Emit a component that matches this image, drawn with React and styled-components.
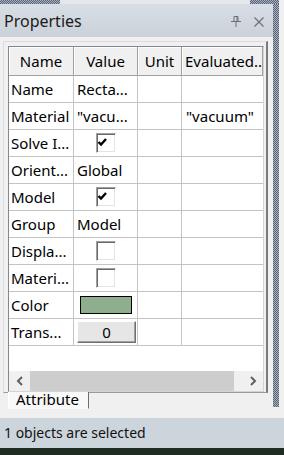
import React from 'react'
import styled, { createGlobalStyle } from 'styled-components'

const GlobalStyle = createGlobalStyle`
  html, body {
    margin: 0;
    padding: 0;
    background: #f0f0f0;
  }
  body {
    font-family: "Noto Sans", "Open Sans", sans-serif;
    color: #000;
  }
`

const hatch = `repeating-conic-gradient(#57637a 0 25%, #aab1bb 0 50%) 0 0 / 2px 2px`

const Screen = styled.div`
  width: 284px;
  height: 455px;
  display: flex;
  flex-direction: column;
  overflow: hidden;
`

const Workspace = styled.div`
  display: grid;
  grid-template-columns: 273px 6px 1fr;
  grid-template-rows: 4px 1fr;
  height: 418px;
  background: #f0f0f0;
`

const TopStrip = styled.div`
  grid-column: 1 / 3;
  display: flex;
`

const Hatch = styled.div`
  width: ${p => p.$w || 'auto'};
  flex: ${p => (p.$w ? 'none' : '1')};
  background: ${p => (p.$light ? '#e4e7eb' : hatch)};
`

const SideHatch = styled.div`
  grid-column: 2;
  grid-row: 2;
  height: 403px;
  background: ${hatch};
`

const Panel = styled.div`
  grid-column: 1;
  grid-row: 2;
  display: flex;
  flex-direction: column;
  min-height: 0;
`

const TitleBar = styled.div`
  height: 33px;
  flex: none;
  display: flex;
  align-items: center;
  padding-left: 4px;
  background: linear-gradient(#d8dee5, #cad1d9);
`

const TitleText = styled.div`
  flex: 1;
  font-size: 16px;
  color: #1b1b1b;
`

const TitleIcon = styled.svg`
  flex: none;
  margin-right: ${p => p.$mr}px;
  margin-top: 2px;
`

const Body = styled.div`
  flex: 1;
  padding: 4px 0 0 3px;
  display: flex;
  flex-direction: column;
`

const Frame = styled.div`
  width: 265px;
  box-sizing: border-box;
  border: 1px solid;
  border-color: #dcdcdc #7a7a7a #9a9a9a #dcdcdc;
  border-right-width: 2px;
  padding: 4px 2px 0 4px;
`

const Inner = styled.div`
  width: 256px;
  box-sizing: border-box;
  border: 1px solid;
  border-color: #828790 #d4d4d4 #d4d4d4 #828790;
  background: #fff;
`

const Table = styled.div`
  display: grid;
  grid-template-columns: 65px 64px 44px 81px;
  grid-auto-rows: 27px;
  grid-template-rows: 29px;
`

const HeadCell = styled.div`
  box-sizing: border-box;
  background: #f0f0f0;
  border-right: 1px solid #a0a0a0;
  border-bottom: 1px solid #a0a0a0;
  box-shadow: inset 1px 1px #fff;
  font-size: 15px;
  line-height: 28px;
  text-align: ${p => p.$align || 'center'};
  padding-left: ${p => p.$pl || 0}px;
  white-space: nowrap;
  overflow: hidden;
`

const Cell = styled.div`
  box-sizing: border-box;
  border-bottom: 1px solid #c4c4c4;
  border-right: ${p => (p.$last ? 'none' : '1px solid #c4c4c4')};
  display: flex;
  align-items: center;
  justify-content: ${p => (p.$center ? 'center' : 'flex-start')};
  padding-left: ${p => p.$pl || 0}px;
  font-size: 15px;
  white-space: nowrap;
  overflow: hidden;
`

const Check = styled.div`
  width: 20px;
  height: 20px;
  box-sizing: border-box;
  border: 1px solid;
  border-color: #a0a0a0 #fff #fff #a0a0a0;
  box-shadow: inset 1px 1px #696969, inset -1px -1px #e3e3e3;
  background: #fff;
  margin-left: 1px;
  display: flex;
  align-items: flex-start;
  justify-content: flex-start;
`

const Swatch = styled.div`
  width: 52px;
  height: 18px;
  box-sizing: border-box;
  border: 1px solid #000;
  background: ${p => p.$color};
  margin-left: 1px;
`

const ValueButton = styled.div`
  width: 59px;
  height: 22px;
  box-sizing: border-box;
  margin-left: 3px;
  border: 1px solid;
  border-color: #fff #6f6f6f #6f6f6f #fff;
  box-shadow: inset -1px -1px #a0a0a0;
  background: #e6e6e6;
  font-size: 15px;
  line-height: 20px;
  text-align: center;
`

const Filler = styled.div`
  height: 25px;
`

const Scrollbar = styled.div`
  height: 20px;
  display: flex;
  background: #f0f0f0;
`

const ArrowBtn = styled.div`
  width: 21px;
  flex: none;
  display: flex;
  align-items: center;
  justify-content: center;
`

const Thumb = styled.div`
  width: 204px;
  flex: none;
  background: #cdcdcd;
`

const Track = styled.div`
  flex: 1;
`

const TabStrip = styled.div`
  flex: 1;
  padding-left: 5px;
  display: flex;
  align-items: flex-start;
`

const Tab = styled.div`
  width: 81px;
  height: 17px;
  box-sizing: border-box;
  margin-top: -1px;
  border: 1px solid;
  border-color: #b0b0b0 #6d6d6d transparent #fff;
  border-top: none;
  background: #f8f8f8;
  font-size: 15px;
  line-height: 15px;
  padding-left: 7px;
`

const StatusBar = styled.div`
  height: 30px;
  flex: none;
  background: #cdd5dc;
  padding-left: 4px;
  font-size: 14px;
  line-height: 30px;
  color: #111;
`

const BottomEdge = styled.div`
  height: 7px;
  flex: none;
  background: #1f2c21;
`

const CheckBox = ({ checked }) => (
  <Check>
    {checked && (
      <svg width="12" height="14" viewBox="0 0 12 14">
        <path d="M1.5 8 L4 10.5 L9 5" fill="none" stroke="#000" strokeWidth="2.4" />
      </svg>
    )}
  </Check>
)

const Chevron = ({ dir }) => (
  <svg width="8" height="10" viewBox="0 0 8 10">
    <path
      d={dir === 'left' ? 'M6 1 L2 5 L6 9' : 'M2 1 L6 5 L2 9'}
      fill="none"
      stroke="#606060"
      strokeWidth="2"
    />
  </svg>
)

const rows = [
  { name: 'Name', text: 'Recta...' },
  { name: 'Material', text: '"vacu...', evaluated: '"vacuum"' },
  { name: 'Solve I...', check: true },
  { name: 'Orient...', text: 'Global' },
  { name: 'Model', check: true },
  { name: 'Group', text: 'Model' },
  { name: 'Displa...', check: false },
  { name: 'Materi...', check: false },
  { name: 'Color', swatch: '#8fae8e' },
  { name: 'Trans...', button: '0' },
]

const renderValue = row => {
  if (row.text) return <Cell $pl={3}>{row.text}</Cell>
  if (row.check !== undefined) return <Cell $center><CheckBox checked={row.check} /></Cell>
  if (row.swatch) return <Cell $center><Swatch $color={row.swatch} /></Cell>
  return <Cell><ValueButton>{row.button}</ValueButton></Cell>
}

export default function App() {
  return (
    <Screen>
      <GlobalStyle />
      <Workspace>
        <TopStrip>
          <Hatch $w="60px" />
          <Hatch $light />
          <Hatch $w="29px" />
        </TopStrip>
        <Panel>
          <TitleBar>
            <TitleText>Properties</TitleText>
            <TitleIcon $mr={13} width="10" height="11" viewBox="0 0 10 11">
              <path d="M3 0.5 H7 V5.5 M3 0.5 V5.5 M0 5.5 H10 M5 5.5 V11 M6 1 V5" fill="none" stroke="#6e6e6e" strokeWidth="1" />
            </TitleIcon>
            <TitleIcon $mr={9} width="10" height="10" viewBox="0 0 10 10">
              <path d="M0.5 0.5 L9.5 9.5 M9.5 0.5 L0.5 9.5" stroke="#707070" strokeWidth="1.2" />
            </TitleIcon>
          </TitleBar>
          <Body>
            <Frame>
              <Inner>
                <Table>
                  <HeadCell>Name</HeadCell>
                  <HeadCell>Value</HeadCell>
                  <HeadCell>Unit</HeadCell>
                  <HeadCell $align="left" $pl={3}>Evaluated..</HeadCell>
                  {rows.map(row => (
                    <React.Fragment key={row.name}>
                      <Cell $pl={2}>{row.name}</Cell>
                      {renderValue(row)}
                      <Cell />
                      <Cell $last $pl={4}>{row.evaluated}</Cell>
                    </React.Fragment>
                  ))}
                </Table>
                <Filler />
                <Scrollbar>
                  <ArrowBtn><Chevron dir="left" /></ArrowBtn>
                  <Thumb />
                  <Track />
                  <ArrowBtn><Chevron dir="right" /></ArrowBtn>
                </Scrollbar>
              </Inner>
            </Frame>
            <TabStrip>
              <Tab>Attribute</Tab>
            </TabStrip>
          </Body>
        </Panel>
        <SideHatch />
      </Workspace>
      <StatusBar>1 objects are selected</StatusBar>
      <BottomEdge />
    </Screen>
  )
}
